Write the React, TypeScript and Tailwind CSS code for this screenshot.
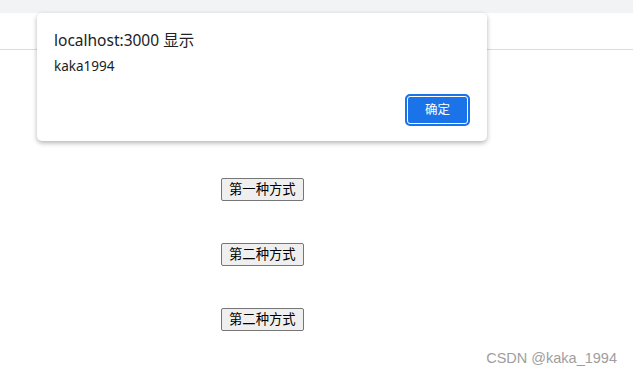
// Alert dialog over a page with three plain buttons

const cjk = { fontFamily: '"Noto Sans", "Noto Sans CJK SC", sans-serif' };

function PlainButton({ label }: { label: string }) {
  return (
    <button
      className="h-[23px] px-[7px] text-[13.333px] leading-[19px] text-black bg-[#efefef] border border-[#767676] rounded-[2px]"
      style={cjk}
    >
      {label}
    </button>
  );
}

export default function App() {
  return (
    <div className="relative w-[633px] h-[373px] bg-white overflow-hidden" style={cjk}>
      {/* Browser chrome strip */}
      <div className="h-[13px] bg-[#f1f3f4]" />
      <div className="h-[37px] border-b border-[#dadce0]" />

      {/* Page content */}
      <div className="flex flex-col items-start gap-[42px] pt-[128px] pl-[221px]">
        <PlainButton label="第一种方式" />
        <PlainButton label="第二种方式" />
        <PlainButton label="第二种方式" />
      </div>

      {/* Alert dialog */}
      <div className="absolute left-[37px] top-[13px] w-[450px] h-[128px] bg-white rounded-[5px] shadow-[0_2px_5px_rgba(0,0,0,0.3)] px-[17px] pt-[15px] flex flex-col">
        <div className="text-[15.5px] leading-[24px] text-[#202124]">localhost:3000 显示</div>
        <div className="mt-[4px] text-[13.5px] leading-[20px] text-[#202124]">kaka1994</div>
        <div className="flex justify-end mt-[18px]">
          <button className="w-[65px] h-[32px] rounded-[5px] border-2 border-[#1a73e8] bg-[#1a73e8] p-0">
            <span className="flex items-center justify-center w-full h-full rounded-[3px] border border-white bg-[#1a73e8] text-white text-[12.5px] leading-none">
              确定
            </span>
          </button>
        </div>
      </div>

      {/* Watermark */}
      <div
        className="absolute right-[16px] bottom-[6px] text-[14.5px] leading-[17px] text-[#9e9e9e]"
        style={{ fontFamily: '"Liberation Sans", Arial, sans-serif' }}
      >
        CSDN @kaka_1994
      </div>
    </div>
  );
}
